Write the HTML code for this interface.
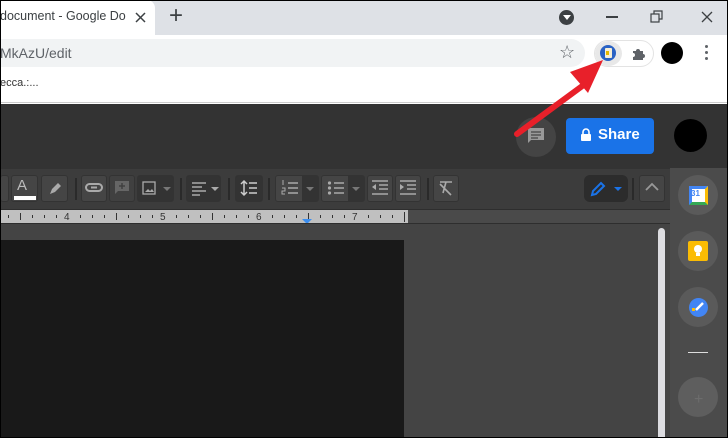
<!DOCTYPE html>
<html><head><meta charset="utf-8"><style>
*{margin:0;padding:0;box-sizing:border-box}
body{width:728px;height:438px;overflow:hidden;position:relative;font-family:"Liberation Sans",Arial,sans-serif;background:#444}
.a{position:absolute}
.btn{position:absolute;top:175px;height:27px;background:#454545;border:1px solid #333;border-radius:3px}
.sep{position:absolute;top:178px;width:2px;height:22px;background:#2a2a2a}
</style></head><body>
<div class="a" style="left:0;top:0;width:728px;height:35px;background:#dee1e6"></div>
<div class="a" style="left:0;top:0;width:155px;height:36px;background:#fff;border-radius:0 8px 0 0"></div>
<div class="a" style="left:0;top:9px;font-size:12.5px;color:#3c4043;white-space:nowrap;width:126px;overflow:hidden">document - Google Docs</div>
<svg class="a" style="left:135px;top:12px" width="11" height="11"><path d="M1 1L10 10M10 1L1 10" stroke="#3c4043" stroke-width="1.5"/></svg>
<div class="a" style="left:169px;top:2px;font-size:24px;color:#3c4043;font-weight:300">+</div>
<div class="a" style="left:559px;top:10px;width:15px;height:15px;border-radius:50%;background:#3c4043"></div>
<div class="a" style="left:563px;top:15px;width:0;height:0;border-left:4px solid transparent;border-right:4px solid transparent;border-top:5px solid #fff"></div>
<div class="a" style="left:606px;top:16px;width:12px;height:1.5px;background:#3c4043"></div>
<svg class="a" style="left:650px;top:10px" width="14" height="14"><rect x="1" y="4" width="8" height="8" fill="none" stroke="#3c4043" stroke-width="1.2"/><path d="M4 4V1h8v8h-3" fill="none" stroke="#3c4043" stroke-width="1.2"/></svg>
<svg class="a" style="left:700px;top:10px" width="14" height="14"><path d="M2 2L12 12M12 2L2 12" stroke="#3c4043" stroke-width="1.3"/></svg>
<div class="a" style="left:0;top:35px;width:728px;height:69px;background:#fff"></div>
<div class="a" style="left:0;top:39px;width:585px;height:28px;background:#f1f3f4;border-radius:0 14px 14px 0"></div>
<div class="a" style="left:0;top:45px;font-size:14px;color:#5f6368">MkAzU/edit</div>
<div class="a" style="left:559px;top:42px;font-size:18px;color:#5f6368">☆</div>
<div class="a" style="left:594px;top:40px;width:60px;height:27px;border:1px solid #e3e3e3;border-radius:14px"></div>
<div class="a" style="left:595px;top:41px;width:27px;height:25px;border-radius:50%;background:#e8e8e8"></div>
<div class="a" style="left:600px;top:45px;width:16px;height:16px;border-radius:50%;background:#2a62c4"></div>
<div class="a" style="left:605px;top:48px;width:7px;height:10px;background:#f5eed6;border-radius:1px"></div>
<div class="a" style="left:606px;top:51px;width:3px;height:4px;background:#e6b800"></div>
<svg class="a" style="left:631px;top:45px" width="16" height="16"><path d="M2 6h3a2 2 0 1 1 4 0h3v3a2 2 0 1 1 0 4v2H2v-3a2 2 0 1 0 0-4z" fill="#5f6368"/></svg>
<div class="a" style="left:661px;top:42px;width:22px;height:22px;border-radius:50%;background:#000"></div>
<div class="a" style="left:705px;top:45px;width:3px;height:3px;border-radius:50%;background:#5f6368;box-shadow:0 6px #5f6368,0 12px #5f6368"></div>
<div class="a" style="left:0;top:77px;font-size:11px;color:#333">ecca.:...</div>
<div class="a" style="left:0;top:102px;width:728px;height:1px;background:#ccc"></div>
<div class="a" style="left:0;top:104px;width:728px;height:65px;background:#333"></div>
<div class="a" style="left:516px;top:117px;width:40px;height:40px;border-radius:50%;background:#444"></div>
<svg class="a" style="left:526px;top:126px" width="20" height="20"><path d="M2 2h16v12H5l-3 3z" fill="#999"/><path d="M5 6h10M5 9h10M5 12h7" stroke="#444" stroke-width="1.3"/></svg>
<div class="a" style="left:566px;top:118px;width:88px;height:36px;background:#1a73e8;border-radius:4px"></div>
<svg class="a" style="left:580px;top:128px" width="12" height="14"><path d="M3 6V4a3 3 0 0 1 6 0v2" fill="none" stroke="#fff" stroke-width="1.6"/><rect x="1" y="6" width="10" height="7" rx="1" fill="#fff"/></svg>
<div class="a" style="left:598px;top:126px;font-size:15px;font-weight:bold;color:#fff">Share</div>
<div class="a" style="left:674px;top:119px;width:33px;height:33px;border-radius:50%;background:#000"></div>
<div class="a" style="left:0;top:169px;width:670px;height:40px;background:#3c3c3c"></div>
<div class="btn" style="left:0;width:9px"></div>
<div class="btn" style="left:11px;width:27px"></div>
<div class="a" style="left:17px;top:177px;font-size:15px;color:#bbb">A</div>
<div class="a" style="left:14px;top:196px;width:22px;height:4px;background:#fff"></div>
<div class="btn" style="left:41px;width:27px"></div>
<svg class="a" style="left:47px;top:180px" width="16" height="16"><path d="M3 14l2-5 6-6 3 3-6 6z" fill="#aaa"/></svg>
<div class="sep" style="left:75px"></div>
<div class="btn" style="left:81px;width:26px"></div>
<svg class="a" style="left:85px;top:182px" width="18" height="12"><rect x="1" y="2" width="16" height="7" rx="3.5" fill="none" stroke="#aaa" stroke-width="2"/><path d="M6 5.5h6" stroke="#454545" stroke-width="3"/><path d="M6 5.5h6" stroke="#aaa" stroke-width="2"/></svg>
<div class="btn" style="left:109px;width:26px;background:#404040"></div>
<svg class="a" style="left:114px;top:180px" width="16" height="16"><path d="M1 1h14v10H4l-3 3z" fill="#666"/><path d="M8 3v6M5 6h6" stroke="#404040" stroke-width="1.5"/></svg>
<div class="btn" style="left:137px;width:37px;background:#333"></div>
<svg class="a" style="left:142px;top:181px" width="14" height="14"><rect x="1" y="1" width="12" height="12" fill="none" stroke="#aaa" stroke-width="1.3"/><path d="M3 11l3-3 2 2 2-2 2 3z" fill="#aaa"/></svg>
<div class="a" style="left:163px;top:187px;border-left:4px solid transparent;border-right:4px solid transparent;border-top:4px solid #777"></div>
<div class="sep" style="left:180px"></div>
<div class="btn" style="left:186px;width:35px;background:#333"></div>
<svg class="a" style="left:191px;top:180px" width="16" height="16"><path d="M1 3h14M1 7h10M1 11h14M1 15h8" stroke="#aaa" stroke-width="1.6"/></svg>
<div class="a" style="left:211px;top:187px;border-left:4px solid transparent;border-right:4px solid transparent;border-top:4px solid #aaa"></div>
<div class="sep" style="left:228px"></div>
<div class="btn" style="left:235px;width:28px;background:#333"></div>
<svg class="a" style="left:240px;top:179px" width="18" height="18"><path d="M4 2v14M1 5l3-3 3 3M1 13l3 3 3-3" fill="none" stroke="#ccc" stroke-width="1.5"/><path d="M9 4h8M9 9h8M9 14h8" stroke="#ccc" stroke-width="1.6"/></svg>
<div class="sep" style="left:268px"></div>
<div class="btn" style="left:275px;width:44px"></div>
<div class="a" style="left:302px;top:176px;width:16px;height:25px;background:#333"></div>
<svg class="a" style="left:281px;top:179px" width="18" height="18"><path d="M2 1v5M1 9h3v3H1v3h3" fill="none" stroke="#aaa" stroke-width="1"/><path d="M7 4h10M7 9h10M7 14h10" stroke="#aaa" stroke-width="1.6"/></svg>
<div class="a" style="left:306px;top:187px;border-left:4px solid transparent;border-right:4px solid transparent;border-top:4px solid #777"></div>
<div class="btn" style="left:321px;width:44px"></div>
<div class="a" style="left:348px;top:176px;width:16px;height:25px;background:#333"></div>
<svg class="a" style="left:327px;top:179px" width="18" height="18"><circle cx="2.5" cy="4" r="1.6" fill="#aaa"/><circle cx="2.5" cy="9" r="1.6" fill="#aaa"/><circle cx="2.5" cy="14" r="1.6" fill="#aaa"/><path d="M7 4h10M7 9h10M7 14h10" stroke="#aaa" stroke-width="1.6"/></svg>
<div class="a" style="left:352px;top:187px;border-left:4px solid transparent;border-right:4px solid transparent;border-top:4px solid #777"></div>
<div class="btn" style="left:367px;width:26px"></div>
<svg class="a" style="left:371px;top:179px" width="18" height="18"><path d="M1 2h16M8 6h9M8 10h9M1 15h16" stroke="#aaa" stroke-width="1.6"/><path d="M5 5v6L1 8z" fill="#aaa"/></svg>
<div class="btn" style="left:395px;width:26px"></div>
<svg class="a" style="left:399px;top:179px" width="18" height="18"><path d="M1 2h16M8 6h9M8 10h9M1 15h16" stroke="#aaa" stroke-width="1.6"/><path d="M1 5v6l4-3z" fill="#aaa"/></svg>
<div class="sep" style="left:427px"></div>
<div class="btn" style="left:433px;width:26px"></div>
<svg class="a" style="left:438px;top:180px" width="16" height="16"><path d="M2 2h12M8 2l-3 11M2 4l11 11" stroke="#aaa" stroke-width="1.6"/></svg>
<div class="btn" style="left:584px;width:44px;background:#2c2c2c;border-color:#2c2c2c;border-radius:6px"></div>
<svg class="a" style="left:590px;top:181px" width="16" height="16"><path d="M2 14l1-4 8-8 3 3-8 8z" fill="none" stroke="#1a73e8" stroke-width="2"/></svg>
<div class="a" style="left:614px;top:187px;border-left:4px solid transparent;border-right:4px solid transparent;border-top:4px solid #1a73e8"></div>
<div class="sep" style="left:632px"></div>
<div class="btn" style="left:639px;width:26px"></div>
<svg class="a" style="left:645px;top:182px" width="14" height="10"><path d="M1 8l6-6 6 6" fill="none" stroke="#999" stroke-width="1.8"/></svg>
<div class="a" style="left:0;top:209px;width:670px;height:15px;background:#4a4a4a;border-top:1px solid #2e2e2e;border-bottom:1px solid #2e2e2e"></div>
<div class="a" style="left:0;top:210px;width:408px;height:13px;background:#c0c0c0"></div>
<svg class="a" style="left:0;top:210px" width="410" height="13">
<g stroke="#333" stroke-width="1">
<path d="M8.5 5v3M32.5 5v3M44.5 5v3M56.5 5v3M80.5 5v3M92.5 5v3M104.5 5v3M128.5 5v3M140.5 5v3M152.5 5v3M176.5 5v3M188.5 5v3M200.5 5v3M224.5 5v3M236.5 5v3M248.5 5v3M272.5 5v3M284.5 5v3M296.5 5v3M320.5 5v3M332.5 5v3M344.5 5v3M368.5 5v3M380.5 5v3M392.5 5v3"/>
<path d="M20.5 3v7M116.5 3v7M212.5 3v7M308.5 3v7M404.5 2v10"/>
</g>
<g font-size="10" fill="#333" font-family="Liberation Sans"><text x="64" y="10">4</text><text x="160" y="10">5</text><text x="256" y="10">6</text><text x="352" y="10">7</text></g>
<path d="M302 9h10l-5 5z" fill="#3b8ef0"/>
</svg>
<div class="a" style="left:0;top:224px;width:670px;height:214px;background:#444"></div>
<div class="a" style="left:0;top:240px;width:404px;height:198px;background:#191919"></div>
<div class="a" style="left:658px;top:228px;width:7px;height:210px;background:#dcdce0;border-radius:4px 4px 0 0"></div>
<div class="a" style="left:670px;top:168px;width:58px;height:270px;background:#4b4b4b"></div>
<div class="a" style="left:678px;top:175px;width:40px;height:40px;border-radius:50%;background:#5a5a5a"></div>
<div class="a" style="left:689px;top:186px;width:19px;height:19px;background:#fff;border:3px solid #4285f4;border-right-color:#fbbc04;border-bottom-color:#34a853"></div>
<div class="a" style="left:691px;top:189px;font-size:8px;color:#4285f4;font-weight:bold">31</div>
<div class="a" style="left:678px;top:231px;width:40px;height:40px;border-radius:50%;background:#5a5a5a"></div>
<div class="a" style="left:688px;top:241px;width:20px;height:20px;background:#fbbc04;border-radius:2px"></div>
<div class="a" style="left:694px;top:245px;width:8px;height:8px;border-radius:50%;background:#fff"></div>
<div class="a" style="left:696px;top:253px;width:4px;height:3px;background:#fff"></div>
<div class="a" style="left:678px;top:287px;width:40px;height:40px;border-radius:50%;background:#5a5a5a"></div>
<div class="a" style="left:689px;top:298px;width:19px;height:19px;border-radius:50%;background:#4285f4"></div>
<svg class="a" style="left:689px;top:298px" width="19" height="19"><path d="M7 12l7-7" stroke="#fff" stroke-width="2.5"/><rect x="3" y="10" width="3" height="3" fill="#fbbc04"/></svg>
<div class="a" style="left:688px;top:352px;width:20px;height:1px;background:#ddd"></div>
<div class="a" style="left:678px;top:377px;width:40px;height:40px;border-radius:50%;background:#5e5e5e"></div>
<div class="a" style="left:694px;top:391px;font-size:16px;color:#6c6c6c">+</div>
<svg class="a" style="left:0;top:0" width="728" height="438">
<path d="M517 134L585 84" stroke="#e8202a" stroke-width="6" stroke-linecap="round"/>
<path d="M603 60L570 72L588 93z" fill="#e8202a"/>
</svg>
<div class="a" style="left:0;top:0;width:728px;height:438px;border:1px solid #000"></div>
</body></html>
